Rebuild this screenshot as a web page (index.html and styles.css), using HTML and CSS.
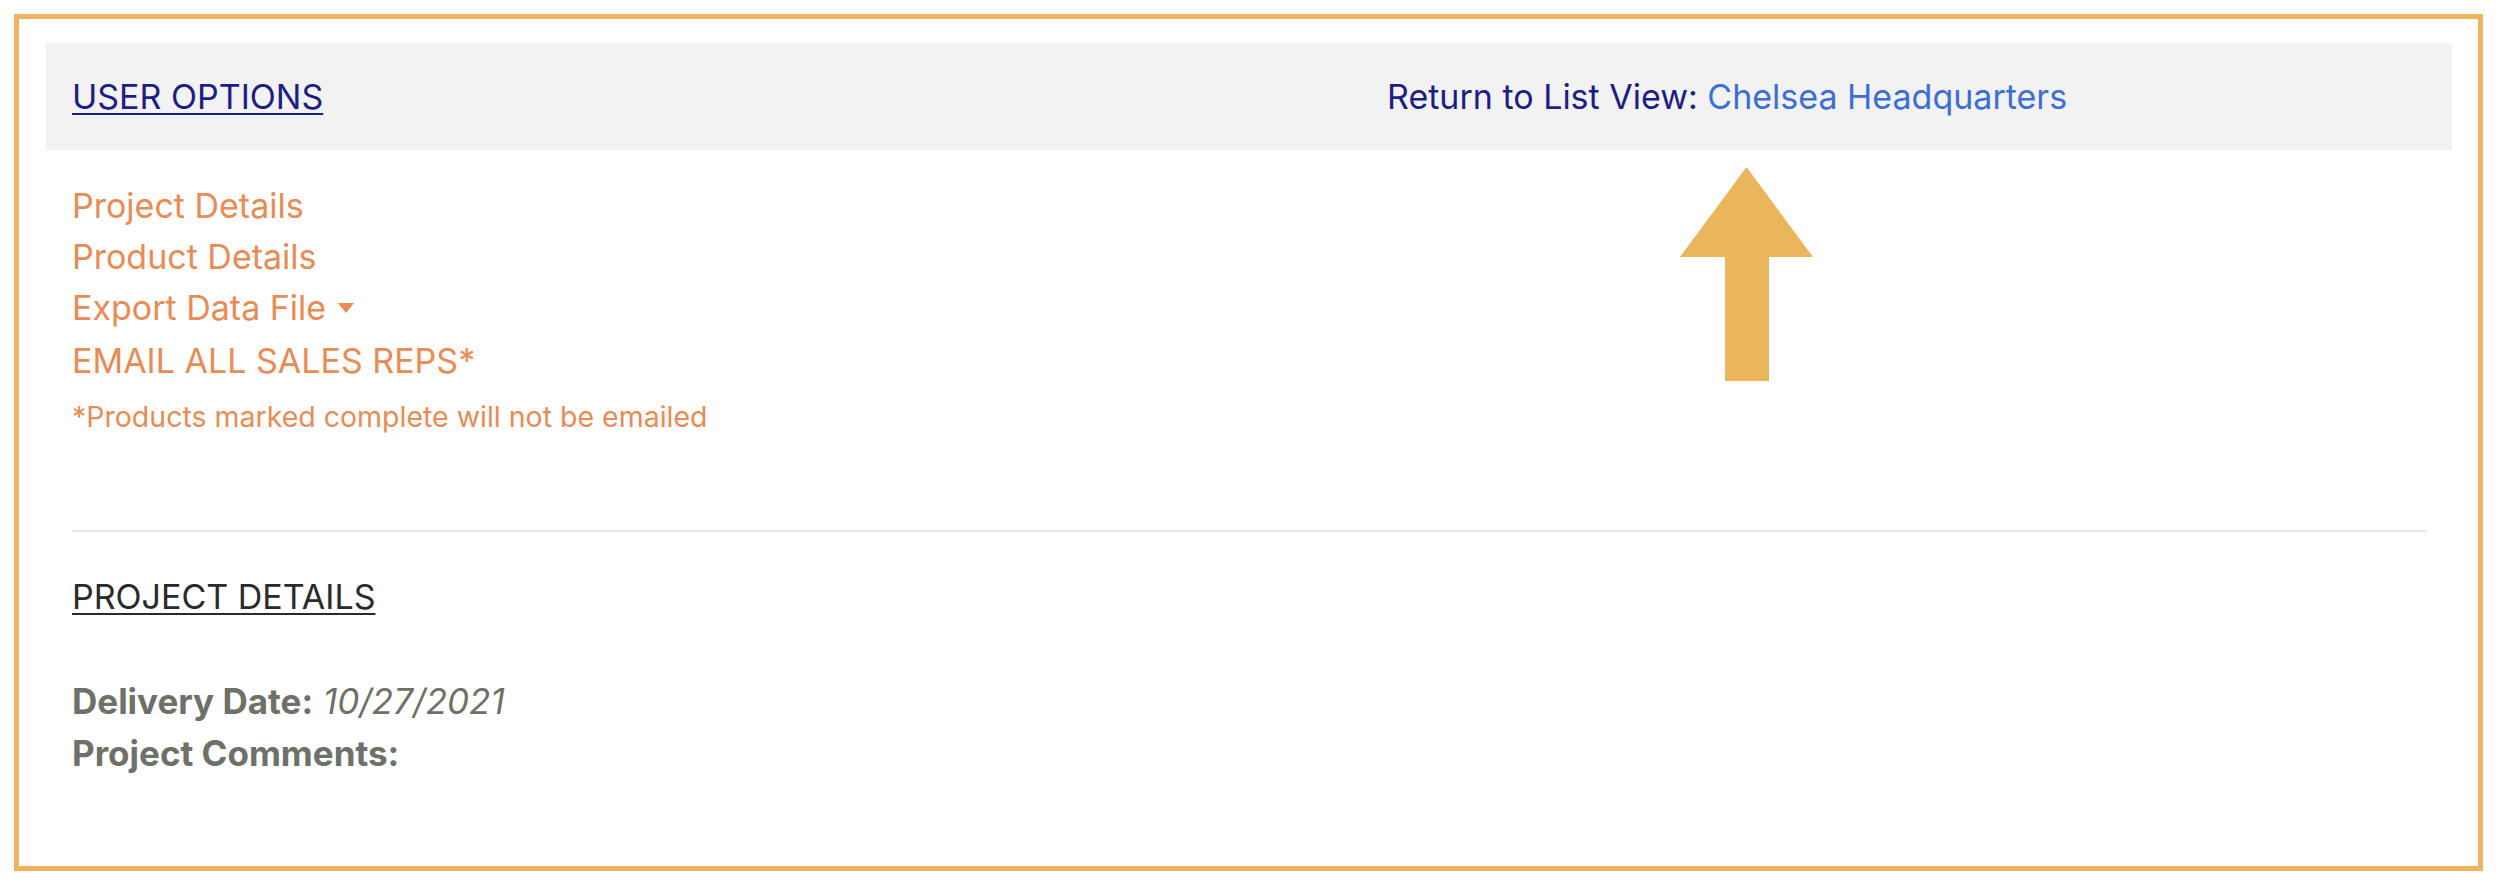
FILE: index.html
```html
<!DOCTYPE html>
<html>
<head>
<meta charset="utf-8">
<link rel="stylesheet" href="styles.css">
</head>
<body>
<div class="frame">
  <div class="options-bar">
    <a class="options-title" href="#">USER OPTIONS</a>
    <div class="return-link">Return to List View: <a href="#">Chelsea Headquarters</a></div>
  </div>
  <div class="content">
    <ul class="menu">
      <li><a href="#">Project Details</a></li>
      <li><a href="#">Product Details</a></li>
      <li><a href="#">Export Data File<span class="caret"></span></a></li>
      <li><a href="#">EMAIL ALL SALES REPS*</a></li>
    </ul>
    <p class="note">*Products marked complete will not be emailed</p>
    <hr class="divider">
    <h2 class="section-title">PROJECT DETAILS</h2>
    <div class="details">
      <div class="detail-row"><span class="label">Delivery Date:</span> <em class="value">10/27/2021</em></div>
      <div class="detail-row"><span class="label">Project Comments:</span></div>
    </div>
  </div>
  <svg class="pointer-arrow" width="133" height="214" viewBox="0 0 133 214">
    <polygon points="66.5,0 133,90 89,90 89,214 45,214 45,90 0,90" fill="#ebb55b"/>
  </svg>
</div>
</body>
</html>
```
FILE: styles.css
```css
html, body {
  margin: 0;
  padding: 0;
  background: #ffffff;
}
body {
  font-family: Inter, "Liberation Sans", Arial, sans-serif;
  font-size: 34px;
  line-height: 51px;
}
.frame {
  position: relative;
  box-sizing: border-box;
  width: 2469px;
  height: 857px;
  margin: 14px 0 0 14px;
  border: 5px solid #f0b25c;
  padding: 24px 26px 0 27px;
}
.options-bar {
  display: grid;
  grid-template-columns: 1315px 1fr;
  align-items: center;
  height: 107px;
  padding-left: 26px;
  background: #f2f2f2;
}
.options-title {
  color: #1d1d86;
  text-decoration: underline;
  text-underline-offset: 4px;
  text-decoration-thickness: 2px;
  justify-self: start;
}
.return-link {
  color: #1d1d86;
}
.return-link a {
  color: #3c6fd6;
  text-decoration: none;
}
.content {
  padding: 30px 26px 0 26px;
}
.menu {
  list-style: none;
  margin: 0;
  padding: 0;
}
.menu li {
  margin: 0;
}
.menu a {
  color: #e98b52;
  text-decoration: none;
}
.menu li:last-child {
  margin-top: 2px;
}
.caret {
  display: inline-block;
  width: 0;
  height: 0;
  margin-left: 12px;
  vertical-align: 7px;
  border-top: 10px solid #e98b52;
  border-left: 8px solid transparent;
  border-right: 8px solid transparent;
}
.note {
  margin: 8px 0 0 0;
  font-size: 28.5px;
  line-height: 45px;
  color: #e98b52;
}
.divider {
  margin: 91px 0 0 0;
  border: 0;
  border-top: 2px solid #e6e6e6;
  height: 0;
}
.section-title {
  margin: 39px 0 0 0;
  font-size: 34px;
  line-height: 51px;
  font-weight: normal;
  color: #2a2a2a;
  text-decoration: underline;
  text-underline-offset: 4px;
  text-decoration-thickness: 2px;
}
.details {
  margin-top: 53px;
  color: #6d7168;
  font-size: 35px;
}
.detail-row {
  line-height: 52px;
}
.label {
  font-weight: bold;
}
.value {
  font-style: italic;
}
.pointer-arrow {
  position: absolute;
  left: 1661px;
  top: 148px;
}
```
